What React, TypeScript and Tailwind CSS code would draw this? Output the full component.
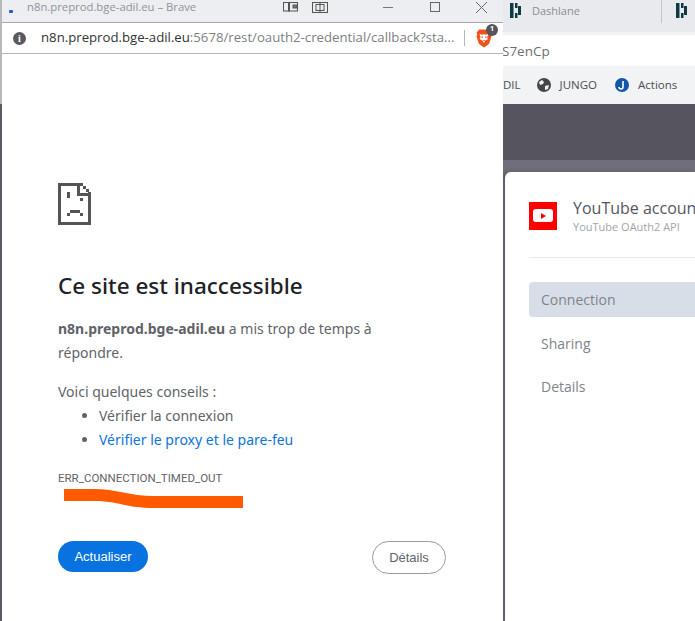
const PAGE = "font-['Noto_Sans','Open_Sans',sans-serif]";

const SadPage = () => (
  <svg width="33" height="42" viewBox="0 0 33 42" shapeRendering="crispEdges" fill="#555555">
    <path d="M0 0h22v3H3v36h27V13h3v29H0z" />
    <path d="M19 0h3v10h11v3H19z" />
    <rect x="22" y="0" width="3" height="3" />
    <rect x="25" y="3" width="3" height="3" />
    <rect x="28" y="6" width="3" height="3" />
    <rect x="30" y="9" width="3" height="3" />
    <rect x="9" y="9" width="3" height="6" />
    <rect x="22" y="15" width="3" height="3" />
    <rect x="12" y="27" width="10" height="3" />
    <rect x="9" y="30" width="3" height="3" />
    <rect x="22" y="30" width="3" height="3" />
  </svg>
);

const DashlaneIcon = () => (
  <svg width="11" height="15" viewBox="0 0 11 15" fill="#0e3a44">
    <rect x="0" y="0" width="3.5" height="15" />
    <rect x="5" y="0" width="2.5" height="5" />
    <rect x="5" y="10" width="2.5" height="5" />
    <rect x="8" y="3" width="3" height="9" />
  </svg>
);

const BraveIcon = () => (
  <svg width="16" height="19" viewBox="0 0 16 19">
    <path d="M3 0.5h10l1 1.5 1.5 1.5-.7 2 .7 2-2.500 7.500L8 18.500 3 15 0.500 7.500l.7-2-.7-2L2 2z" fill="#f1511b" />
    <path d="M3.500 5l3 .7L8 5.200l1.500.5 3-.7-1.500 3.500 1 1.500-2.800 1.500L8 14l-1.700-2.500-2.800-1.500 1-1.500z" fill="#ffffff" />
    <path d="M5.500 7.500h1.500v1.200H5.500zM9 7.500h1.500v1.200H9zM7 11h2l-1 1.500z" fill="#f1511b" />
  </svg>
);

const Bookmark = ({ icon, label }: { icon: React.ReactNode; label: string }) => (
  <div className="flex items-center gap-[9px]">
    {icon}
    <span>{label}</span>
  </div>
);

const ErrorPopup = () => (
  <div className="flex w-[503px] shrink-0 bg-white shadow-[2px_0_5px_rgba(0,0,0,0.35)]">
    <div className="flex w-[2px] shrink-0 flex-col">
      <div className="h-[104px] bg-[#b9b9bc]" />
      <div className="flex-1 bg-[#5a5963]" />
    </div>
    <div className={`${PAGE} flex min-w-0 flex-1 flex-col`}>
      <div className="flex h-[23px] items-center border-b border-[#a9a9ad] bg-[#eceef2] pl-[7px] text-[11.3px] text-[#8f9399]">
        <span className="h-[3px] w-[4px] rounded-[1px] bg-[#1a5fd0]" />
        <span className="ml-[14px] mt-[-8px] font-['Open_Sans',sans-serif]">n8n.preprod.bge-adil.eu – Brave</span>
        <div className="ml-auto mt-[-8px] flex items-center">
          <svg width="16" height="10" viewBox="0 0 16 10" fill="none" stroke="#555555" className="mr-[13px]">
            <rect x="0.5" y="0.500" width="14" height="8.500" />
            <rect x="5.500" y="0.500" width="1" height="8.500" />
            <rect x="10" y="3" width="4" height="3" fill="#777777" />
          </svg>
          <svg width="16" height="11" viewBox="0 0 16 11" fill="none" stroke="#555555" className="mr-[55px]">
            <rect x="0.500" y="0.500" width="15" height="10" />
            <rect x="4" y="2.500" width="8" height="6" />
            <path d="M8 0v11" />
          </svg>
          <span className="mr-[37px] h-px w-[10px] bg-[#777777]" />
          <span className="mr-[36px] h-[10px] w-[10px] border border-[#666666]" />
          <svg width="11" height="11" viewBox="0 0 11 11" stroke="#666666" className="mr-[16px]">
            <path d="M0 0l11 11M11 0L0 11" />
          </svg>
        </div>
      </div>
      <div className="flex h-[31px] items-center border-b border-[#b5b5b8] pl-[11px] pr-[5px] font-['Open_Sans',sans-serif] text-[13.2px] text-[#7d7f83]">
        <span className="flex size-[13px] shrink-0 items-center justify-center rounded-full bg-[#5a5a5e] font-['Liberation_Serif',serif] text-[10px] font-bold text-white">i</span>
        <span className="ml-[15px] whitespace-nowrap">
          <span className="text-[#333333]">n8n.preprod.bge-adil.eu</span>:5678/rest/oauth2-credential/callback?sta...
        </span>
        <span className="ml-auto h-[16px] w-px shrink-0 bg-[#b8b8b8]" />
        <div className="relative ml-[11px] flex w-[22px] shrink-0">
          <BraveIcon />
          <span className="absolute right-0 top-[-5px] flex size-[12px] items-center justify-center rounded-full bg-[#55565c] text-[7px] font-bold text-white">1</span>
        </div>
      </div>
      <div className="flex flex-1 flex-col pl-[56px] pr-[57px] pt-[129px]">
        <SadPage />
        <h1 className="mt-[45px] text-[22.5px] leading-[32px] font-medium text-[#202124]">Ce site est inaccessible</h1>
        <p className="mt-[15px] max-w-[330px] text-[14px] leading-[24px] text-[#5f6368]">
          <b className="font-bold">n8n.preprod.bge-adil.eu</b> a mis trop de temps à répondre.
        </p>
        <p className="mt-[15px] text-[14px] leading-[24px] text-[#5f6368]">Voici quelques conseils :</p>
        <ul className="list-disc pl-[41px] text-[14px] leading-[24px] text-[#5f6368]">
          <li>Vérifier la connexion</li>
          <li><span className="text-[#0b74de]">Vérifier le proxy et le pare-feu</span></li>
        </ul>
        <div className="mt-[18px] font-['Roboto',sans-serif] text-[11.5px] leading-[16px] text-[#5f6368]">ERR_CONNECTION_TIMED_OUT</div>
        <svg width="179" height="19" viewBox="0 0 179 19" className="ml-[6px] mt-[3px]">
          <path d="M0 0h30c22 0 36 7 60 7h89v12H90c-28 0-36-7-60-7H0z" fill="#ff5a00" />
        </svg>
        <div className="mt-[33px] flex items-start justify-between">
          <button className="h-[31px] w-[90px] rounded-full bg-[#0873e0] font-['Liberation_Sans',sans-serif] text-[13px] font-medium text-white">Actualiser</button>
          <button className="h-[33px] w-[74px] rounded-full border border-[#9a9a9e] font-['Liberation_Sans',sans-serif] text-[13px] text-[#5f6368]">Détails</button>
        </div>
      </div>
    </div>
  </div>
);

const BehindWindow = () => (
  <div className="flex min-w-0 flex-1 flex-col overflow-hidden font-['Open_Sans',sans-serif]">
    <div className="flex h-[35px] items-start border-b-[3px] border-[#f0f2f3] bg-[#e8eaed] pt-[3px] text-[11px] text-[#8a8d91]">
      <div className="ml-[7px]"><DashlaneIcon /></div>
      <span className="ml-[11px] leading-[16px]">Dashlane</span>
      <span className="ml-[81px] mt-[-3px] h-[23px] w-px bg-[#c4c6c9]" />
      <div className="ml-[14px]"><DashlaneIcon /></div>
    </div>
    <div className="flex h-[31px] items-center bg-white pt-[1px] text-[13.5px] text-[#6b6f73]">
      <span className="-ml-px">S7enCp</span>
    </div>
    <div className="flex h-[38px] items-center gap-[18px] bg-[#f1f3f4] text-[11.5px] text-[#4a4d52]">
      <span className="mr-[-2px]">DIL</span>
      <Bookmark
        label="JUNGO"
        icon={<svg width="14" height="14" viewBox="0 0 14 14"><circle cx="7" cy="7" r="7" fill="#444649" /><path d="M2 4l3-2 2 2-1 2-3 1zM8 8l4-1-1 4-3 1z" fill="#f1f3f4" /></svg>}
      />
      <Bookmark
        label="Actions"
        icon={<svg width="14" height="14" viewBox="0 0 14 14"><circle cx="7" cy="7" r="7" fill="#1356ab" /><path d="M8 3v6a2 2 0 0 1-4 0" fill="none" stroke="#ffffff" strokeWidth="1.600" /></svg>}
      />
    </div>
    <div className="h-[56px] bg-[#55545f]" />
    <div className="flex flex-1 flex-col bg-[#6f6e7a] pt-[12px] pl-[2px]">
      <div className="flex flex-1 flex-col rounded-tl-[6px] bg-white pl-[24px] pt-[26px] shadow-[-3px_0_5px_rgba(0,0,0,0.18)]">
        <div className="flex h-[35px] items-center gap-[16px] whitespace-nowrap">
          <div className="flex size-[28px] shrink-0 items-center justify-center bg-[#ff0000]">
            <div className="flex h-[13px] w-[20px] items-center justify-center rounded-[3px] bg-white">
              <span className="ml-px border-y-[3px] border-l-[5px] border-y-transparent border-l-[#ff0000]" />
            </div>
          </div>
          <div>
            <div className="text-[16px] leading-[20px] text-[#54565f]">YouTube account</div>
            <div className="mt-[2px] text-[11px] leading-[13px] text-[#a2a5ab]">YouTube OAuth2 API</div>
          </div>
        </div>
        <div className="mt-[24px] h-px bg-[#e9eaed]" />
        <div className="mt-[24px] flex h-[35px] items-center rounded-l-[4px] bg-[#d8dee8] pl-[12px] text-[14px] text-[#7f838b]">Connection</div>
        <div className="mt-[5px] flex h-[43px] items-center pl-[12px] text-[14px] text-[#7f838b]">Sharing</div>
        <div className="flex h-[43px] items-center pl-[12px] text-[14px] text-[#7f838b]">Details</div>
      </div>
    </div>
  </div>
);

export default function App() {
  return (
    <div className="flex h-[621px] w-[695px] overflow-hidden bg-white">
      <ErrorPopup />
      <BehindWindow />
    </div>
  );
}
